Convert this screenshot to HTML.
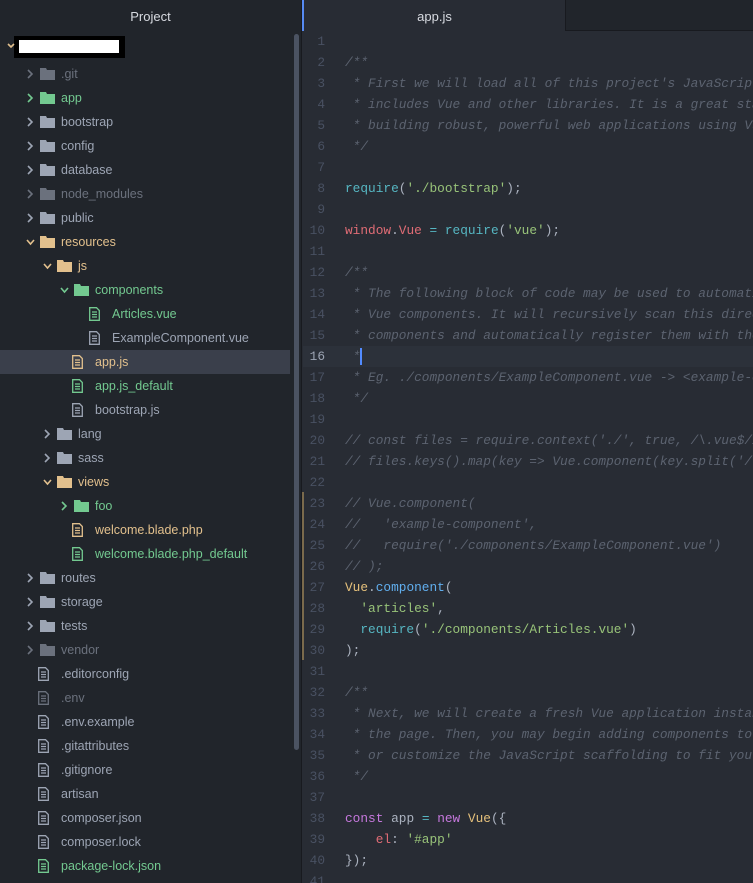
<!DOCTYPE html>
<html style="overflow:hidden;width:753px;height:883px"><head><style>
*{margin:0;padding:0;box-sizing:border-box}
body{width:753px;height:883px;overflow:hidden;background:#282c34;font-family:"Liberation Sans",sans-serif;position:relative}
#side{position:absolute;left:0;top:0;width:302px;height:883px;background:#21252b;border-right:1px solid #181a1f;overflow:hidden}
#side .hd{height:33px;line-height:33px;text-align:center;color:#d7dae0;font-size:13px}
.row{position:absolute;left:0;height:24px;line-height:24px;font-size:12.5px;color:#9da5b4;width:290px;white-space:nowrap}
.row.sel{background:#3a3f4b}
.row svg{position:absolute;top:5px}
.row span{position:absolute}
.g{color:#73c990}.o{color:#e2c08d}.d{color:#6b717d}
#sb{position:absolute;left:294px;top:34px;width:5px;height:716px;background:#4b5362;border-radius:3px}
#tabs{position:absolute;left:302px;top:0;width:451px;height:31px;background:#21252b;border-bottom:1px solid #181a1f}
#tab{position:absolute;left:0;top:0;width:264px;height:31px;background:#282c34;border-left:2px solid #568af2;color:#d7dae0;font-size:13px;text-align:center;line-height:33px;border-right:1px solid #181a1f}
#code{position:absolute;left:303px;top:31px;width:450px;height:852px;overflow:hidden;font-family:"Liberation Mono",monospace;font-size:12.8px}
.l{height:21px;line-height:21px;white-space:pre;position:relative;overflow:hidden}
.l .n{position:absolute;left:0;width:22px;text-align:right;color:#495162}
.l .t{position:absolute;left:42px;color:#abb2bf}
.cur{background:#2c313a}
.cur .n{color:#9da5b4}
.c{color:#5c6370;font-style:italic}
.r{color:#e06c75}.s{color:#98c379}.cy{color:#56b6c2}.p{color:#c678dd}.y{color:#e5c07b}.b{color:#61afef}
#mk{position:absolute;left:302px;top:492px;width:2px;height:168px;background:#7a6a4c}
</style></head><body>
<div id="side"><div class="hd">Project</div>
<div style="position:absolute;left:14px;top:36px;width:111px;height:22px;background:#000"></div>
<div style="position:absolute;left:19px;top:40px;width:100px;height:13px;background:#fff"></div>
<svg style="position:absolute;left:7px;top:43px" width="8" height="6"><path d="M1 1L4 4L7 1" stroke="#e2c08d" stroke-width="1.6" fill="none"/></svg>
<div id="rows"></div>
<div id="sb"></div>
</div>
<div id="tabs"><div id="tab">app.js</div></div>
<div id="mk"></div>
<div id="code"></div>
<script>
const rows=[
[1,'f','.git','d',0],[1,'f','app','g',0],[1,'f','bootstrap','',0],[1,'f','config','',0],[1,'f','database','',0],[1,'f','node_modules','d',0],[1,'f','public','',0],[1,'f','resources','o',1],
[2,'f','js','o',1],[3,'f','components','g',1],[4,'x','Articles.vue','g'],[4,'x','ExampleComponent.vue',''],[3,'x','app.js','o',0,1],[3,'x','app.js_default','g'],[3,'x','bootstrap.js',''],
[2,'f','lang','',0],[2,'f','sass','',0],[2,'f','views','o',1],[3,'f','foo','g',0],[3,'x','welcome.blade.php','o'],[3,'x','welcome.blade.php_default','g'],
[1,'f','routes','',0],[1,'f','storage','',0],[1,'f','tests','',0],[1,'f','vendor','d',0],
[1,'x','.editorconfig',''],[1,'x','.env','d'],[1,'x','.env.example',''],[1,'x','.gitattributes',''],[1,'x','.gitignore',''],[1,'x','artisan',''],[1,'x','composer.json',''],[1,'x','composer.lock',''],[1,'x','package-lock.json','g']];
const col={'':'#9da5b4',d:'#6b717d',g:'#73c990',o:'#e2c08d'};
let h='';
rows.forEach((r,i)=>{const [lv,k,name,c,open,sel]=r;const top=62+i*24;const base=(lv-1)*17;const cc=col[c];
let s=`<div class="row ${c}${sel?' sel':''}" style="top:${top}px">`;
if(k=='f'){const cx=base+26;
s+= open?`<svg style="left:${cx}px;top:9px" width="9" height="7"><path d="M1 1L4.5 5L8 1" stroke="${cc}" stroke-width="1.6" fill="none"/></svg>`:`<svg style="left:${cx+1}px;top:7px" width="7" height="10"><path d="M1 1L5 5L1 9" stroke="${cc}" stroke-width="1.6" fill="none"/></svg>`;
s+=`<svg style="left:${base+40}px;top:6px" width="15" height="12"><path d="M0 0H6L7 2H15V12H0Z" fill="${cc}"/></svg>`;
s+=`<span style="left:${base+61}px">${name}</span>`;}
else{const ix=base+38;
s+=`<svg style="left:${ix}px;top:5px" width="11" height="14"><path d="M0.7 0.7H7.5L10.3 3.5V13.3H0.7Z" stroke="${cc}" stroke-width="1.3" fill="none"/><path d="M3 5H8M3 7.5H8M3 10H8" stroke="${cc}" stroke-width="1.2"/></svg>`;
s+=`<span style="left:${base+61}px">${name}</span>`;}
h+=s+'</div>';});
document.getElementById('rows').innerHTML=h;
const L=['','<span class="c">/**</span>',
'<span class="c"> * First we will load all of this project\'s JavaScript dependencies which</span>',
'<span class="c"> * includes Vue and other libraries. It is a great starting point when</span>',
'<span class="c"> * building robust, powerful web applications using Vue and Laravel.</span>',
'<span class="c"> */</span>','',
'<span class="cy">require</span>(<span class="s">\'./bootstrap\'</span>);','',
'<span class="r">window</span>.<span class="r">Vue</span> <span class="cy">=</span> <span class="cy">require</span>(<span class="s">\'vue\'</span>);','',
'<span class="c">/**</span>',
'<span class="c"> * The following block of code may be used to automatically register your</span>',
'<span class="c"> * Vue components. It will recursively scan this directory for the Vue</span>',
'<span class="c"> * components and automatically register them with their "basename".</span>',
'<span class="c"> *</span>',
'<span class="c"> * Eg. ./components/ExampleComponent.vue -> &lt;example-component&gt;&lt;/example-component&gt;</span>',
'<span class="c"> */</span>','',
'<span class="c">// const files = require.context(\'./\', true, /\\.vue$/i)</span>',
'<span class="c">// files.keys().map(key => Vue.component(key.split(\'/\').pop()</span>','',
'<span class="c">// Vue.component(</span>',
'<span class="c">//   \'example-component\',</span>',
'<span class="c">//   require(\'./components/ExampleComponent.vue\')</span>',
'<span class="c">// );</span>',
'<span class="y">Vue</span>.<span class="b">component</span>(',
'  <span class="s">\'articles\'</span>,',
'  <span class="cy">require</span>(<span class="s">\'./components/Articles.vue\'</span>)',
');','',
'<span class="c">/**</span>',
'<span class="c"> * Next, we will create a fresh Vue application instance and attach it to</span>',
'<span class="c"> * the page. Then, you may begin adding components to this application</span>',
'<span class="c"> * or customize the JavaScript scaffolding to fit your unique needs.</span>',
'<span class="c"> */</span>','',
'<span class="p">const</span> app <span class="cy">=</span> <span class="p">new</span> <span class="y">Vue</span>({',
'    <span class="r">el</span>: <span class="s">\'#app\'</span>',
'});',''];
let c='';L.forEach((t,i)=>{const cur=i==15;c+=`<div class="l${cur?' cur':''}"><span class="n">${i+1}</span><span class="t">${t}${cur?'<span style="display:inline-block;width:2px;height:17px;background:#528bff;vertical-align:middle"></span>':''}</span></div>`});
document.getElementById('code').innerHTML=c;
</script>
</body></html>
